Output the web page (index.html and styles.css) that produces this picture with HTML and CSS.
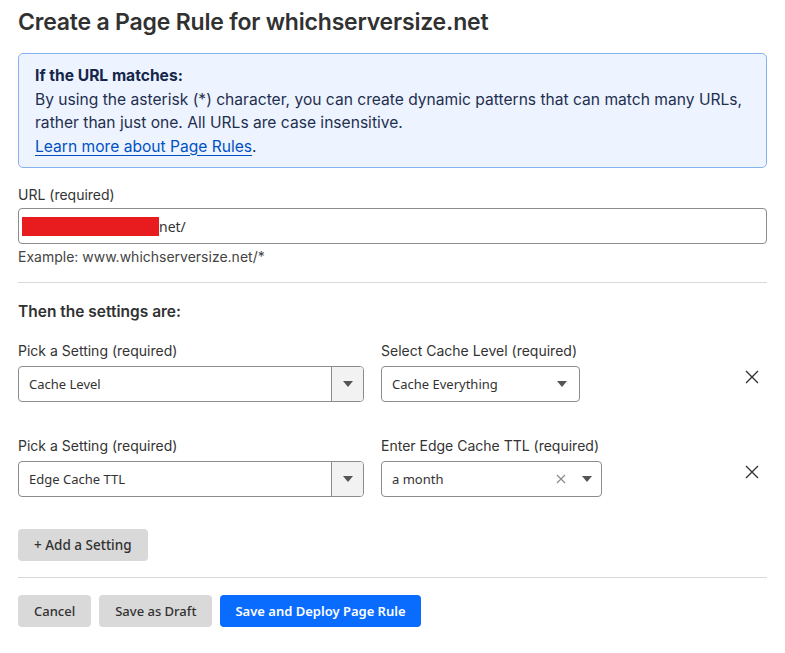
FILE: index.html
```html
<!DOCTYPE html>
<html lang="en">
<head>
    <meta charset="UTF-8">
    <title>Create a Page Rule</title>
    <link rel="stylesheet" href="styles.css">
</head>
<body>

<div class="page">
    <h1 class="title">Create a Page Rule for whichserversize.net</h1>

    <div class="info">
        <strong>If the URL matches:</strong>
        <p>By using the asterisk (*) character, you can create dynamic patterns that can match many URLs, rather than just one. All URLs are case insensitive.</p>
        <a href="#">Learn more about Page Rules</a>.
    </div>

    <label class="label">URL (required)</label>
    <div class="url-input"><span class="redact"></span>net/</div>
    <div class="hint">Example: www.whichserversize.net/*</div>

    <hr class="divider">

    <h3 class="subtitle">Then the settings are:</h3>

    <div class="setting">
        <div class="field field-main">
            <label class="label">Pick a Setting (required)</label>
            <div class="select select-wide">
                <span class="value">Cache Level</span>
                <span class="arrow-box"><span class="caret"></span></span>
            </div>
        </div>
        <div class="field">
            <label class="label">Select Cache Level (required)</label>
            <div class="select select-level">
                <span class="value">Cache Everything</span>
                <span class="caret"></span>
            </div>
        </div>
        <button class="remove" aria-label="Remove">
            <svg width="16" height="16" viewBox="0 0 16 16"><path d="M2 2 L14 14 M14 2 L2 14" stroke="#333" stroke-width="1.4" fill="none"/></svg>
        </button>
    </div>

    <div class="setting">
        <div class="field field-main">
            <label class="label">Pick a Setting (required)</label>
            <div class="select select-wide">
                <span class="value">Edge Cache TTL</span>
                <span class="arrow-box"><span class="caret"></span></span>
            </div>
        </div>
        <div class="field">
            <label class="label">Enter Edge Cache TTL (required)</label>
            <div class="select select-ttl">
                <span class="value">a month</span>
                <svg class="clear" width="10" height="10" viewBox="0 0 10 10"><path d="M1 1 L9 9 M9 1 L1 9" stroke="#888" stroke-width="1.1" fill="none"/></svg>
                <span class="caret"></span>
            </div>
        </div>
        <button class="remove" aria-label="Remove">
            <svg width="16" height="16" viewBox="0 0 16 16"><path d="M2 2 L14 14 M14 2 L2 14" stroke="#333" stroke-width="1.4" fill="none"/></svg>
        </button>
    </div>

    <button class="btn btn-grey btn-add">+ Add a Setting</button>

    <hr class="divider divider-bottom">

    <div class="actions">
        <button class="btn btn-grey">Cancel</button>
        <button class="btn btn-grey">Save as Draft</button>
        <button class="btn btn-blue">Save and Deploy Page Rule</button>
    </div>
</div>

</body>
</html>
```

FILE: styles.css
```css
/* General Styling */
body {
    margin: 0;
    font-family: Inter, "Noto Sans", sans-serif;
    color: #313131;
    background-color: #ffffff;
}
.page {
    width: 749px;
    padding: 6px 18px 20px;
}
.title {
    font-size: 23px;
    font-weight: 600;
    margin: 0 0 15px;
    line-height: 32px;
    letter-spacing: -0.2px;
}

/* Info box */
.info {
    background-color: #edf4ff;
    border: 1px solid #86b3ee;
    border-radius: 5px;
    padding: 10px 16px 9px;
    font-size: 15.6px;
    line-height: 23.5px;
    color: #1f2f4f;
}
.info strong {
    color: #15264a;
}
.info p {
    margin: 0;
}
.info a {
    color: #0051c3;
    text-decoration: underline;
    text-underline-offset: 3px;
}

/* Form fields */
.label {
    display: block;
    font-size: 14px;
    line-height: 18px;
    color: #333;
    margin-bottom: 6px;
}
.page > .label {
    margin-top: 18px;
    margin-bottom: 4px;
}
.url-input {
    height: 34px;
    border: 1px solid #8c8c8c;
    border-radius: 4px;
    display: flex;
    align-items: center;
    padding-left: 3px;
    font-family: "Noto Sans", sans-serif;
    font-size: 14px;
    color: #333;
}
.redact {
    display: inline-block;
    width: 137px;
    height: 19px;
    background-color: #e81c1f;
}
.hint {
    font-size: 14px;
    color: #444;
    margin-top: 4px;
    line-height: 18px;
}
.divider {
    border: none;
    border-top: 1px solid #d9d9d9;
    margin: 16px 0 19px;
}
.subtitle {
    font-size: 15.5px;
    font-weight: 600;
    margin: 0 0 20px;
    line-height: 20px;
}

/* Setting rows */
.setting {
    display: flex;
    align-items: flex-end;
    gap: 17px;
    margin-bottom: 35px;
}
.setting + .setting {
    margin-bottom: 27px;
}
.field-main {
    width: 346px;
}
.field {
    flex: none;
}
.select {
    height: 34px;
    border: 1px solid #8c8c8c;
    border-radius: 4px;
    display: flex;
    align-items: center;
    font-family: "Noto Sans", sans-serif;
    font-size: 13px;
    color: #333;
    background-color: #fff;
    box-sizing: content-box;
}
.select .value {
    flex: 1;
    padding-left: 10px;
}
.select-wide {
    overflow: hidden;
}
.arrow-box {
    width: 31px;
    height: 100%;
    border-left: 1px solid #8c8c8c;
    background-color: #f2f2f2;
    display: flex;
    align-items: center;
    justify-content: center;
}
.caret {
    width: 0;
    height: 0;
    border-left: 5px solid transparent;
    border-right: 5px solid transparent;
    border-top: 6px solid #555;
}
.select-level {
    width: 199px;
    padding-right: 12px;
    box-sizing: border-box;
    height: 36px;
}
.select-ttl {
    width: 221px;
    padding-right: 9px;
    box-sizing: border-box;
    height: 36px;
}
.clear {
    margin-right: 16px;
}
.remove {
    margin-left: auto;
    margin-right: 7px;
    margin-bottom: 14px;
    background: none;
    border: none;
    padding: 0;
    cursor: pointer;
}

/* Buttons */
.btn {
    border: none;
    border-radius: 4px;
    height: 32px;
    padding: 0 16px;
    font-family: "Noto Sans", sans-serif;
    font-size: 13px;
    font-weight: 500;
    cursor: pointer;
}
.btn-grey {
    background-color: #d9d9d9;
    color: #313131;
}
.btn-blue {
    background-color: #0a6cff;
    color: #fff;
    font-weight: 600;
    padding: 0 15px;
}
.btn-add {
    margin-top: 5px;
    font-size: 13.5px;
}
.divider-bottom {
    margin: 16px 0 17px;
}
.actions {
    display: flex;
    gap: 8px;
}
```
